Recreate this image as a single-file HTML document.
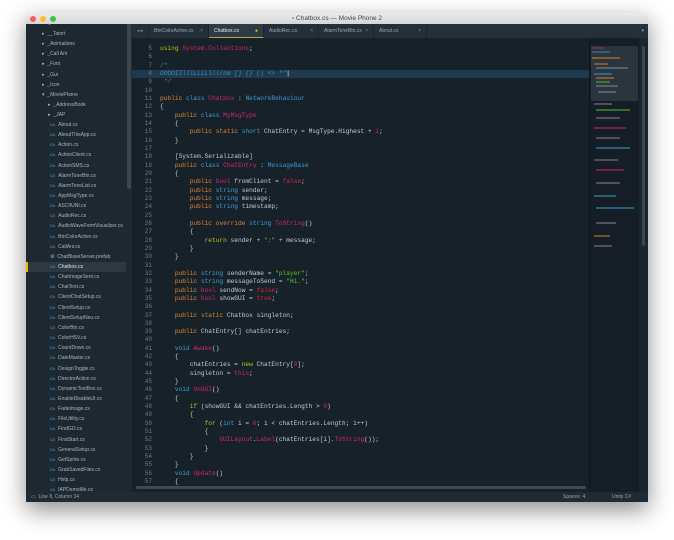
<!DOCTYPE html>
<html><head><meta charset="utf-8"><style>
*{margin:0;padding:0;box-sizing:border-box}
body{width:674px;height:540px;background:#fff;position:relative;overflow:hidden;font-family:"Liberation Sans",sans-serif}
#win{position:absolute;left:26px;top:13px;width:622px;height:489px;background:#17212a;box-shadow:0 8px 22px rgba(0,0,0,.45);overflow:hidden}
#title{position:absolute;left:0;top:0;width:622px;height:11px;background:linear-gradient(#ececec,#d6d6d6);font-size:6.5px;color:#444;text-align:center;line-height:11px}
.dot{position:absolute;top:3px;width:6px;height:6px;border-radius:50%}
#side{position:absolute;left:0;top:11px;width:106px;height:468px;background:#1d2831;overflow:hidden}
#side div{position:absolute;font-size:5px;color:#a9b4bd;white-space:nowrap;height:10px;line-height:10px}
#side .f{left:24px}
#side .f:before{content:"C#";color:#3b8fc4;font-size:4px;margin-right:3px;font-weight:bold}
#tabs{position:absolute;left:106px;top:11px;width:516px;height:14px;background:#243039}
.tab{position:absolute;top:0;height:14px;font-size:5px;color:#9aa6ae;line-height:14px;padding-left:5px;border-right:1px solid #1b252d}
.tab b{position:absolute;right:5px;top:0;color:#7d8a93;font-weight:normal}
#gut{position:absolute;left:106px;top:25px;width:28px;height:454px;background:#17212a}
pre{position:absolute;top:32px;font-family:"Liberation Mono",monospace;font-size:6.2px;line-height:8.33px;color:#c5cbd0;white-space:pre}
#nums{left:108px;width:18px;text-align:right;color:#6d7a84;font-size:6px}
#code{left:134px}
.k{color:#e0842c}.t{color:#3a9ed3}.n{color:#d3266d}.s{color:#5cbf26}.r{color:#d6263a}.y{color:#b7c21c}.c{color:#3f8cb8;font-style:italic}
#hl{position:absolute;left:106px;top:57px;width:458px;height:8px;background:#1e3a4e}
#mini{position:absolute;left:563px;top:25px;width:50px;height:454px;background:#151e26;border-left:1px solid #0f161c}
#vs{position:absolute;left:613px;top:25px;width:9px;height:454px;background:#1b252d}
#status{position:absolute;left:0;top:479px;width:622px;height:10px;background:#1f2b34;font-size:5px;color:#99a5ae;line-height:10px}
</style></head><body>
<div id="win">
<div id="title"><span class="dot" style="left:4px;background:#fc5b57"></span><span class="dot" style="left:14px;background:#fdbc2e"></span><span class="dot" style="left:24px;background:#33c748"></span>▫ Chatbox.cs — Movie Phone 2</div>
<div id="side">
<div style="left:18px;top:-6px">▸ _Shared</div>
<div style="left:16px;top:5px">▸ &nbsp;__Tatort</div>
<div style="left:16px;top:15px">▸ &nbsp;_Animations</div>
<div style="left:16px;top:25px">▸ &nbsp;_Call Ani</div>
<div style="left:16px;top:35px">▸ &nbsp;_Font</div>
<div style="left:16px;top:46px">▸ &nbsp;_Gui</div>
<div style="left:16px;top:56px">▸ &nbsp;_Icon</div>
<div style="left:16px;top:66px">▾ &nbsp;_MoviePhone</div>
<div style="left:22px;top:76px">▸ &nbsp;_AddressBook</div>
<div style="left:22px;top:86px">▸ &nbsp;_JAP</div>
<div style="left:0;top:238px;width:100px;height:10px;background:#2c3943"></div>
<div style="left:0;top:238px;width:2px;height:10px;background:#f0b400"></div>
<div style="left:101px;top:0;width:4px;height:165px;background:#3a4650;border-radius:2px"></div>
<div class="f" style="top:96px">About.cs</div>
<div class="f" style="top:106px">AboutThisApp.cs</div>
<div class="f" style="top:116px">Action.cs</div>
<div class="f" style="top:126px">ActionClient.cs</div>
<div class="f" style="top:137px">ActionSMS.cs</div>
<div class="f" style="top:147px">AlarmToneBtn.cs</div>
<div class="f" style="top:157px">AlarmToneList.cs</div>
<div class="f" style="top:167px">AppMsgType.cs</div>
<div class="f" style="top:177px">ASCIIUNI.cs</div>
<div class="f" style="top:187px">AudioRec.cs</div>
<div class="f" style="top:197px">AudioWaveFormVisualizer.cs</div>
<div class="f" style="top:208px">BtnColorActive.cs</div>
<div class="f" style="top:218px">CallAni.cs</div>
<div style="left:24px;top:228px">⚙ &nbsp;ChatBlaseServer.prefab</div>
<div class="f" style="top:238px;color:#e3e8ec">Chatbox.cs</div>
<div class="f" style="top:248px">ChatImageSent.cs</div>
<div class="f" style="top:258px">ChatText.cs</div>
<div class="f" style="top:268px">ClientChatSetup.cs</div>
<div class="f" style="top:279px">ClientSetup.cs</div>
<div class="f" style="top:289px">ClientSetupNeu.cs</div>
<div class="f" style="top:299px">ColorBtn.cs</div>
<div class="f" style="top:309px">ColorHSV.cs</div>
<div class="f" style="top:319px">CountDown.cs</div>
<div class="f" style="top:329px">DateMaster.cs</div>
<div class="f" style="top:340px">DesignToggle.cs</div>
<div class="f" style="top:350px">DirectorAction.cs</div>
<div class="f" style="top:360px">DynamicTextBox.cs</div>
<div class="f" style="top:370px">EnableDisableUI.cs</div>
<div class="f" style="top:380px">FadeImage.cs</div>
<div class="f" style="top:390px">FileUtility.cs</div>
<div class="f" style="top:400px">FindGO.cs</div>
<div class="f" style="top:411px">FirstStart.cs</div>
<div class="f" style="top:421px">GeneralSetup.cs</div>
<div class="f" style="top:431px">GetSprite.cs</div>
<div class="f" style="top:441px">GrabSavedFiles.cs</div>
<div class="f" style="top:451px">Help.cs</div>
<div class="f" style="top:461px">IAPDemoMe.cs</div>
</div>
<div id="tabs">
<div class="tab" style="left:0;width:17px;color:#7d8a93">◂ ▸</div>
<div class="tab" style="left:17px;width:60px">BtnColorActive.cs<b>×</b></div>
<div class="tab" style="left:77px;width:55px;background:#2e3b45;color:#e6eaee;border-bottom:1px solid #b7a34a">Chatbox.cs<b style="color:#f0c020">●</b></div>
<div class="tab" style="left:132px;width:55px">AudioRec.cs<b>×</b></div>
<div class="tab" style="left:187px;width:55px">AlarmToneBtn.cs<b>×</b></div>
<div class="tab" style="left:242px;width:53px">About.cs<b>×</b></div>
<div style="position:absolute;right:4px;top:0;font-size:5px;color:#99a;line-height:14px">▾</div>
</div>
<div id="gut"></div>
<div id="hl"></div>
<pre id="nums">5
6
7
8
9
10
11
12
13
14
15
16
17
18
19
20
21
22
23
24
25
26
27
28
29
30
31
32
33
34
35
36
37
38
39
40
41
42
43
44
45
46
47
48
49
50
51
52
53
54
55
56
57</pre>
<pre id="code"><span class="y">using</span> <span class="n">System.Collections</span>;

<span class="c">/*</span>
<span class="c">OOOOIIlllLLLLlllrnm [] {} () &lt;&gt; ""</span><span style="color:#fff">|</span>
<span class="c"> */</span>

<span class="k">public</span> <span class="t">class</span> <span class="n">Chatbox</span> : <span class="t">NetworkBehaviour</span>
{
    <span class="k">public</span> <span class="t">class</span> <span class="n">MyMsgType</span>
    {
        <span class="k">public</span> <span class="k">static</span> <span class="t">short</span> ChatEntry = MsgType.Highest + <span class="r">1</span>;
    }

    [System.Serializable]
    <span class="k">public</span> <span class="t">class</span> <span class="n">ChatEntry</span> : <span class="t">MessageBase</span>
    {
        <span class="k">public</span> <span class="n">bool</span> fromClient = <span class="r">false</span>;
        <span class="k">public</span> <span class="t">string</span> sender;
        <span class="k">public</span> <span class="t">string</span> message;
        <span class="k">public</span> <span class="t">string</span> timestamp;

        <span class="k">public</span> <span class="k">override</span> <span class="t">string</span> <span class="n">ToString</span>()
        {
            <span class="y">return</span> sender + <span class="s">":"</span> + message;
        }
    }

    <span class="k">public</span> <span class="t">string</span> senderName = <span class="s">"player"</span>;
    <span class="k">public</span> <span class="t">string</span> messageToSend = <span class="s">"Hi."</span>;
    <span class="k">public</span> <span class="n">bool</span> sendNow = <span class="r">false</span>;
    <span class="k">public</span> <span class="n">bool</span> showGUI = <span class="r">true</span>;

    <span class="k">public</span> <span class="k">static</span> Chatbox singleton;

    <span class="k">public</span> ChatEntry[] chatEntries;

    <span class="t">void</span> <span class="n">Awake</span>()
    {
        chatEntries = <span class="y">new</span> ChatEntry[<span class="r">0</span>];
        singleton = <span class="r">this</span>;
    }
    <span class="t">void</span> <span class="n">OnGUI</span>()
    {
        <span class="y">if</span> (showGUI &amp;&amp; chatEntries.Length &gt; <span class="r">0</span>)
        {
            <span class="y">for</span> (<span class="t">int</span> i = <span class="r">0</span>; i &lt; chatEntries.Length; i++)
            {
                <span class="n">GUILayout</span>.<span class="n">Label</span>(chatEntries[i].<span class="n">ToString</span>());
            }
        }
    }
    <span class="t">void</span> <span class="n">Update</span>()
    {</pre>
<div id="mini">
<div style="position:absolute;left:1px;top:8px;width:47px;height:55px;background:#2a353e"></div>
<svg width="50" height="454" style="position:absolute;left:0;top:0" opacity=".8">
<g stroke-width="1.2">
<line x1="2" y1="10" x2="14" y2="10" stroke="#c0265c"/><line x1="2" y1="14" x2="20" y2="14" stroke="#3a86b0"/><line x1="2" y1="20" x2="30" y2="20" stroke="#e0842c"/>
<line x1="4" y1="26" x2="18" y2="26" stroke="#e0842c"/><line x1="6" y1="30" x2="38" y2="30" stroke="#889"/><line x1="4" y1="36" x2="22" y2="36" stroke="#3a9ed3"/>
<line x1="6" y1="40" x2="24" y2="40" stroke="#e0842c"/><line x1="6" y1="44" x2="20" y2="44" stroke="#5cbf26"/><line x1="6" y1="48" x2="28" y2="48" stroke="#889"/>
<line x1="8" y1="54" x2="26" y2="54" stroke="#889"/><line x1="4" y1="66" x2="22" y2="66" stroke="#889"/><line x1="6" y1="72" x2="40" y2="72" stroke="#5cbf26"/>
<line x1="6" y1="80" x2="30" y2="80" stroke="#889"/><line x1="4" y1="90" x2="36" y2="90" stroke="#d3266d"/><line x1="6" y1="100" x2="30" y2="100" stroke="#889"/>
<line x1="6" y1="110" x2="40" y2="110" stroke="#3a9ed3"/><line x1="4" y1="122" x2="28" y2="122" stroke="#889"/><line x1="6" y1="132" x2="34" y2="132" stroke="#d3266d"/>
<line x1="6" y1="145" x2="30" y2="145" stroke="#889"/><line x1="4" y1="158" x2="26" y2="158" stroke="#3a9ed3"/><line x1="6" y1="170" x2="44" y2="170" stroke="#3a9ed3"/>
<line x1="6" y1="185" x2="26" y2="185" stroke="#889"/><line x1="4" y1="198" x2="20" y2="198" stroke="#e0842c"/><line x1="4" y1="208" x2="22" y2="208" stroke="#889"/>
</g></svg>
</div>
<div id="vs"><div style="position:absolute;left:3px;top:8px;width:3px;height:200px;background:#3a4650;border-radius:2px"></div></div>
<div style="position:absolute;left:110px;top:473px;width:450px;height:3px;background:#3d4a54;border-radius:2px"></div>
<div id="status"><span style="position:absolute;left:5px">▭ &nbsp;Line 8, Column 34</span><span style="position:absolute;left:537px">Spaces: 4</span><span style="position:absolute;left:586px">Unity C#</span></div>
</div>
</body></html>
